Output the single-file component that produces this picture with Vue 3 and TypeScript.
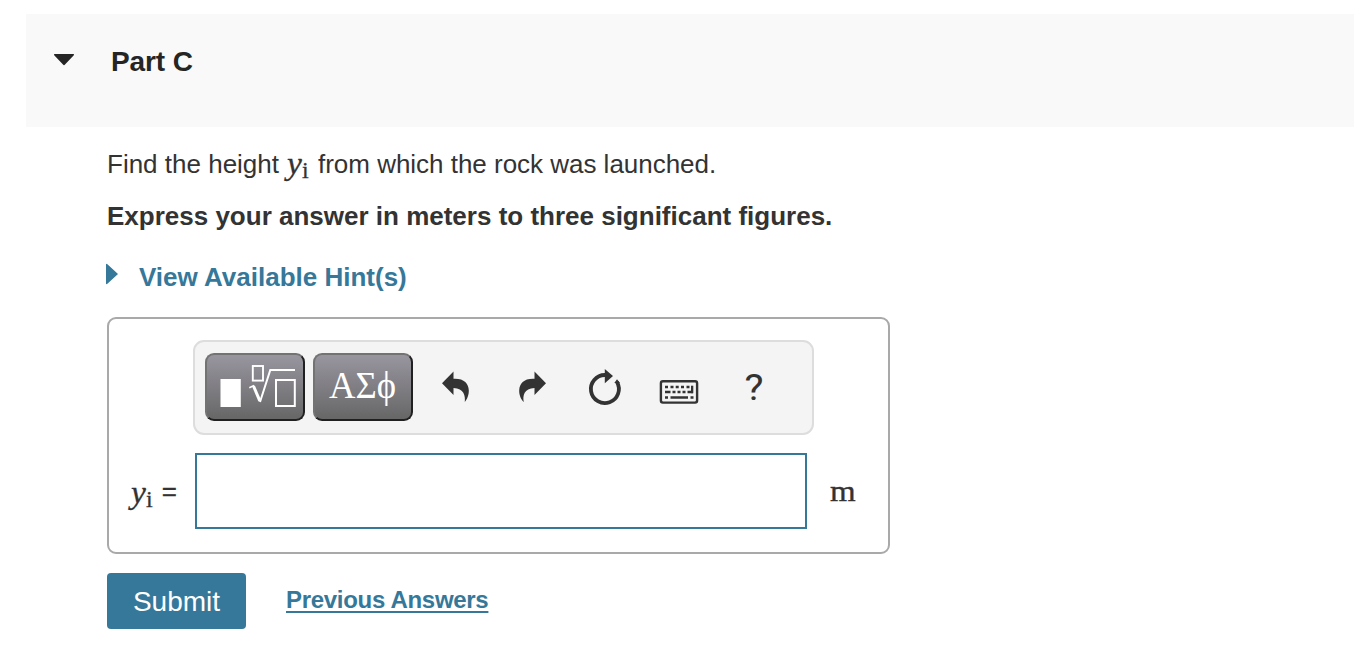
<script setup lang="ts">
import { ref } from 'vue'

const answer = ref('')
const title = 'Part C'
</script>

<template>
  <main class="page">
    <header class="part-header">
      <svg class="caret" width="22" height="14" viewBox="0 0 22 14">
        <path d="M1.5 1H20.5Q21.5 1.3 20.8 2.3L12 11.6Q11 12.8 10 11.6L1.2 2.3Q.5 1.3 1.5 1Z" />
      </svg>
      <h1>{{ title }}</h1>
    </header>

    <section class="content">
      <p class="question">
        <span class="lead">Find the height</span>
        <span class="var"><i>y</i><span class="sub">i</span></span>
        <span class="rest">from which the rock was launched.</span>
      </p>
      <p class="instruction">Express your answer in meters to three significant figures.</p>
      <a class="hints">
        <svg width="13" height="22" viewBox="0 0 13 22"><path d="M0 1.2Q.5.2 1.4 1.2L12 11 1.4 20.8Q.5 21.6 0 20.8Z" /></svg>
        <span>View Available Hint(s)</span>
      </a>

      <div class="answer-box">
        <div class="toolbar">
          <button class="dark" aria-label="Templates">
            <svg width="96" height="64" viewBox="0 0 96 64" fill="none" stroke="#fff">
              <rect x="13.5" y="24" width="20.3" height="28" fill="#fff" stroke="none" />
              <rect x="45.8" y="11" width="10.2" height="14.6" stroke-width="1.9" />
              <path d="M42.3 32.7L47 30.5" stroke-width="1.5" />
              <path d="M46.5 31L52.8 45.8" stroke-width="3" />
              <path d="M53 47L63.3 15H88" stroke-width="2" />
              <rect x="69" y="25" width="18.8" height="26" stroke-width="2" />
            </svg>
          </button>
          <button class="dark" aria-label="Symbols">
            <svg width="96" height="64" viewBox="0 0 96 64" class="greek">
              <text x="14" y="42.5" textLength="67" lengthAdjust="spacingAndGlyphs">ΑΣϕ</text>
            </svg>
          </button>
          <svg class="tools" width="340" height="64" viewBox="0 0 340 64">
            <path d="M12 28.3L23.5 16.5V23.8C34 23.3 38.5 28.3 38.8 35.3C39 40 37 44.5 34.8 47C35.5 41 34 33.3 23.5 33V40.1Z" />
            <path d="M116 28.3L104.5 16.5V23.8C94 23.3 89.5 28.3 89.2 35.3C89 40 91 44.5 93.8 47C92.5 41 94 33.3 104.5 33V40.1Z" />
            <path d="M175 20A14 14 0 1 0 187 27" fill="none" stroke="#333" stroke-width="3.8" />
            <path d="M174.8 14L183 21 174.8 28.3ZM184.3 28L187 24.2 190 28Z" />
            <rect x="230.9" y="26.2" width="36.2" height="21.4" rx="2" fill="none" stroke="#333" stroke-width="2.4" />
            <path d="M235 32H238M240.5 32H243.5M245.7 32H248.7M251 32H254M256.5 32H259.5M235 37H240.5M242.5 37H245.5M247.5 37H250.5M252.5 37H255.5M257.5 37H263M235 42.5H238M240.5 42.5H258M260.5 42.5H263.5" fill="none" stroke="#333" stroke-width="2.4" />
            <path d="M261 30.7H263.3V38.2H261Z" />
            <text x="314.5" y="44.8" textLength="19" lengthAdjust="spacingAndGlyphs" class="help">?</text>
          </svg>
        </div>
        <div class="input-row">
          <label><span class="var"><i>y</i><span class="sub">i</span></span><span class="eq">=</span></label>
          <input v-model="answer" type="text" aria-label="Height in meters" />
          <span class="unit">m</span>
        </div>
      </div>

      <div class="actions">
        <button class="submit">Submit</button>
        <a class="previous">Previous Answers</a>
      </div>
    </section>
  </main>
</template>

<style>
body { margin: 0; background: #fff; overflow: hidden; }
</style>

<style scoped>
* { box-sizing: border-box; }
.page {
  height: 646px;
  padding-top: 14px;
  overflow: hidden;
  font-family: "Liberation Sans", Arial, sans-serif;
  color: #333;
}
.part-header {
  display: flex;
  height: 113px;
  margin-left: 26px;
  padding: 31px 0 0 27px;
  background: #f9f9f9;
  color: #252525;
}
.caret { margin-top: 8px; fill: #252525; }
h1 { margin: 1px 0 0 36px; font-size: 28px; line-height: 32px; letter-spacing: -0.1px; }
.content { padding-left: 107px; }
p { margin: 0; white-space: nowrap; }
.question {
  display: flex;
  align-items: baseline;
  height: 30px;
  margin-top: 21px;
  font-size: 26px;
  line-height: 30px;
}
.rest { letter-spacing: -0.02px; }
.var {
  display: inline-flex;
  align-items: baseline;
  font-family: "Liberation Serif", serif;
  font-size: 31px;
  line-height: 30px;
  -webkit-text-stroke: 0.3px #333;
}
.var i { display: inline-block; width: 15px; transform: translateY(1px) scaleX(1.08); transform-origin: left; }
.sub { font-size: 24px; line-height: 20px; transform: translateY(5px); }
.question .var { width: 22px; margin: 0 9px 0 8px; }
.instruction { margin-top: 23px; font-size: 26px; line-height: 30px; font-weight: bold; }
.hints {
  display: flex;
  height: 30px;
  margin-top: 31px;
  font-size: 26px;
  line-height: 30px;
  font-weight: bold;
  color: #367899;
}
.hints svg { margin: 1px 20px 0 -1px; fill: #367899; }
.answer-box {
  width: 783px;
  height: 237px;
  margin-top: 25px;
  padding: 21px 0 0 20px;
  border: 2px solid #a9a9a9;
  border-radius: 9px;
}
.toolbar {
  display: flex;
  gap: 8px;
  width: 621px;
  height: 95px;
  margin-left: 64px;
  padding: 11px 10px;
  border: 2px solid #ddd;
  border-radius: 11px;
  background: #f4f4f4;
}
.dark {
  width: 100px;
  height: 68px;
  padding: 0;
  border: 2px solid;
  border-color: #737373 #202020 #202020 #737373;
  border-radius: 9px;
  background: linear-gradient(#9a97a1, #656565) border-box;
}
.dark svg { display: block; }
.greek { font: 37px "Liberation Serif", serif; fill: #fff; }
.tools { margin: 2px 0 0 9px; fill: #333; }
.help { font: 36px Roboto, sans-serif; fill: #333; }
.input-row { display: flex; align-items: center; height: 76px; margin-top: 18px; }
label { display: flex; align-items: baseline; width: 66px; padding-left: 2px; }
label .var { transform: translateY(2px); }
.eq { margin-left: 9px; font-size: 26px; -webkit-text-stroke: 0.3px #333; }
input {
  width: 612px;
  height: 76px;
  padding: 8px;
  border: 2px solid #367899;
  background: #fff;
  font-size: 26px;
  outline: none;
}
.unit {
  margin-left: 23px;
  font: 30px/34px "Liberation Serif", serif;
  -webkit-text-stroke: 0.35px #333;
  transform: scaleX(1.1);
  transform-origin: left;
}
.actions { display: flex; margin-top: 19px; align-items: center; }
.submit {
  width: 139px;
  height: 56px;
  padding: 1px 0 0;
  border: 0;
  border-radius: 4px;
  background: #367899;
  color: #fff;
  font: 28px "Liberation Sans", sans-serif;
}
.previous {
  margin: -2px 0 0 40px;
  font-size: 24px;
  font-weight: bold;
  line-height: 28px;
  letter-spacing: -0.3px;
  color: #367899;
  text-decoration: underline;
  text-decoration-thickness: 2px;
  text-underline-offset: 3px;
  text-decoration-skip-ink: none;
}
</style>
